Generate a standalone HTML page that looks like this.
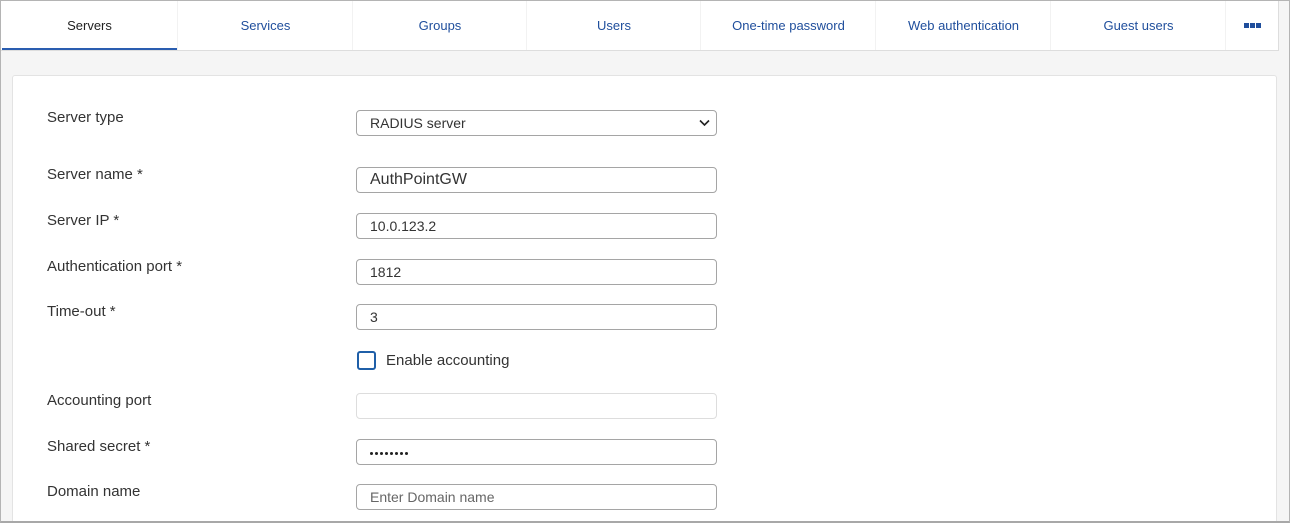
<!DOCTYPE html>
<html><head><style>
body{margin:0;width:1290px;height:523px;overflow:hidden;font-family:"Liberation Sans",sans-serif;background:#fff}
.frame{position:absolute;left:0;top:0;width:1288px;height:520px;border:1px solid #b4b4b4;border-bottom:2px solid #a8a8a8;background:#f5f5f5;overflow:hidden}
.tabs{position:absolute;left:0;top:0;width:1277px;height:49px;background:#fff;border-right:1px solid #ddd;border-bottom:1px solid #ddd}
.tab{position:absolute;top:0;height:49px;line-height:50px;text-align:center;font-size:13px;color:#1f4e9c;border-left:1px solid #f2f2f2}
.tab.a{color:#222;border-bottom:2px solid #2a5db0;height:47px}
.card{position:absolute;left:11px;top:74px;width:1263px;height:460px;background:#ffffff;border:1px solid #e3e3e3;border-radius:3px}
.lbl{position:absolute;left:46px;font-size:15px;color:#333}
.in{position:absolute;left:355px;height:24px;border:1px solid #a5a5a5;border-radius:4px;font-size:14px;color:#333;line-height:24px;padding-left:13px;width:346px;background:#fff}
.dot{display:inline-block;width:3px;height:3px;background:#222;border-radius:50%;margin-right:2px;vertical-align:middle}
.sq{position:absolute;top:22px;width:5px;height:5px;background:#1f4e9c}
</style></head><body><div class="frame">
<div class="tabs">
<div class="tab a" style="left:1px;width:175px;border-left:none">Servers</div>
<div class="tab" style="left:176px;width:175px">Services</div>
<div class="tab" style="left:351px;width:174px">Groups</div>
<div class="tab" style="left:525px;width:174px">Users</div>
<div class="tab" style="left:699px;width:175px">One-time password</div>
<div class="tab" style="left:874px;width:175px">Web authentication</div>
<div class="tab" style="left:1049px;width:175px">Guest users</div>
<div class="tab" style="left:1224px;width:53px"><div class="sq" style="left:18px"></div><div class="sq" style="left:24px"></div><div class="sq" style="left:30px"></div></div>
</div>
<div class="card"></div>
<div class="lbl" style="top:108px">Server type</div>
<div class="in" style="top:109px">RADIUS server<svg style="position:absolute;right:6px;top:8px" width="11" height="8"><path d="M1 1.5L5.5 6 10 1.5" stroke="#222" stroke-width="1.6" fill="none"/></svg></div>
<div class="lbl" style="top:165px">Server name *</div>
<div class="in" style="top:166px;font-size:16px">AuthPointGW</div>
<div class="lbl" style="top:211px">Server IP *</div>
<div class="in" style="top:212px">10.0.123.2</div>
<div class="lbl" style="top:257px">Authentication port *</div>
<div class="in" style="top:258px">1812</div>
<div class="lbl" style="top:302px">Time-out *</div>
<div class="in" style="top:303px">3</div>
<div style="position:absolute;left:356px;top:350px;width:15px;height:15px;border:2px solid #1f5fa8;border-radius:3px;background:#fff"></div>
<div class="lbl" style="left:385px;top:351px">Enable accounting</div>
<div class="lbl" style="top:391px">Accounting port</div>
<div class="in" style="top:392px;border-color:#ddd"></div>
<div class="lbl" style="top:437px">Shared secret *</div>
<div class="in" style="top:438px"><span class="dot"></span><span class="dot"></span><span class="dot"></span><span class="dot"></span><span class="dot"></span><span class="dot"></span><span class="dot"></span><span class="dot"></span></div>
<div class="lbl" style="top:482px">Domain name</div>
<div class="in" style="top:483px;color:#666">Enter Domain name</div>
</div>
</body></html>
